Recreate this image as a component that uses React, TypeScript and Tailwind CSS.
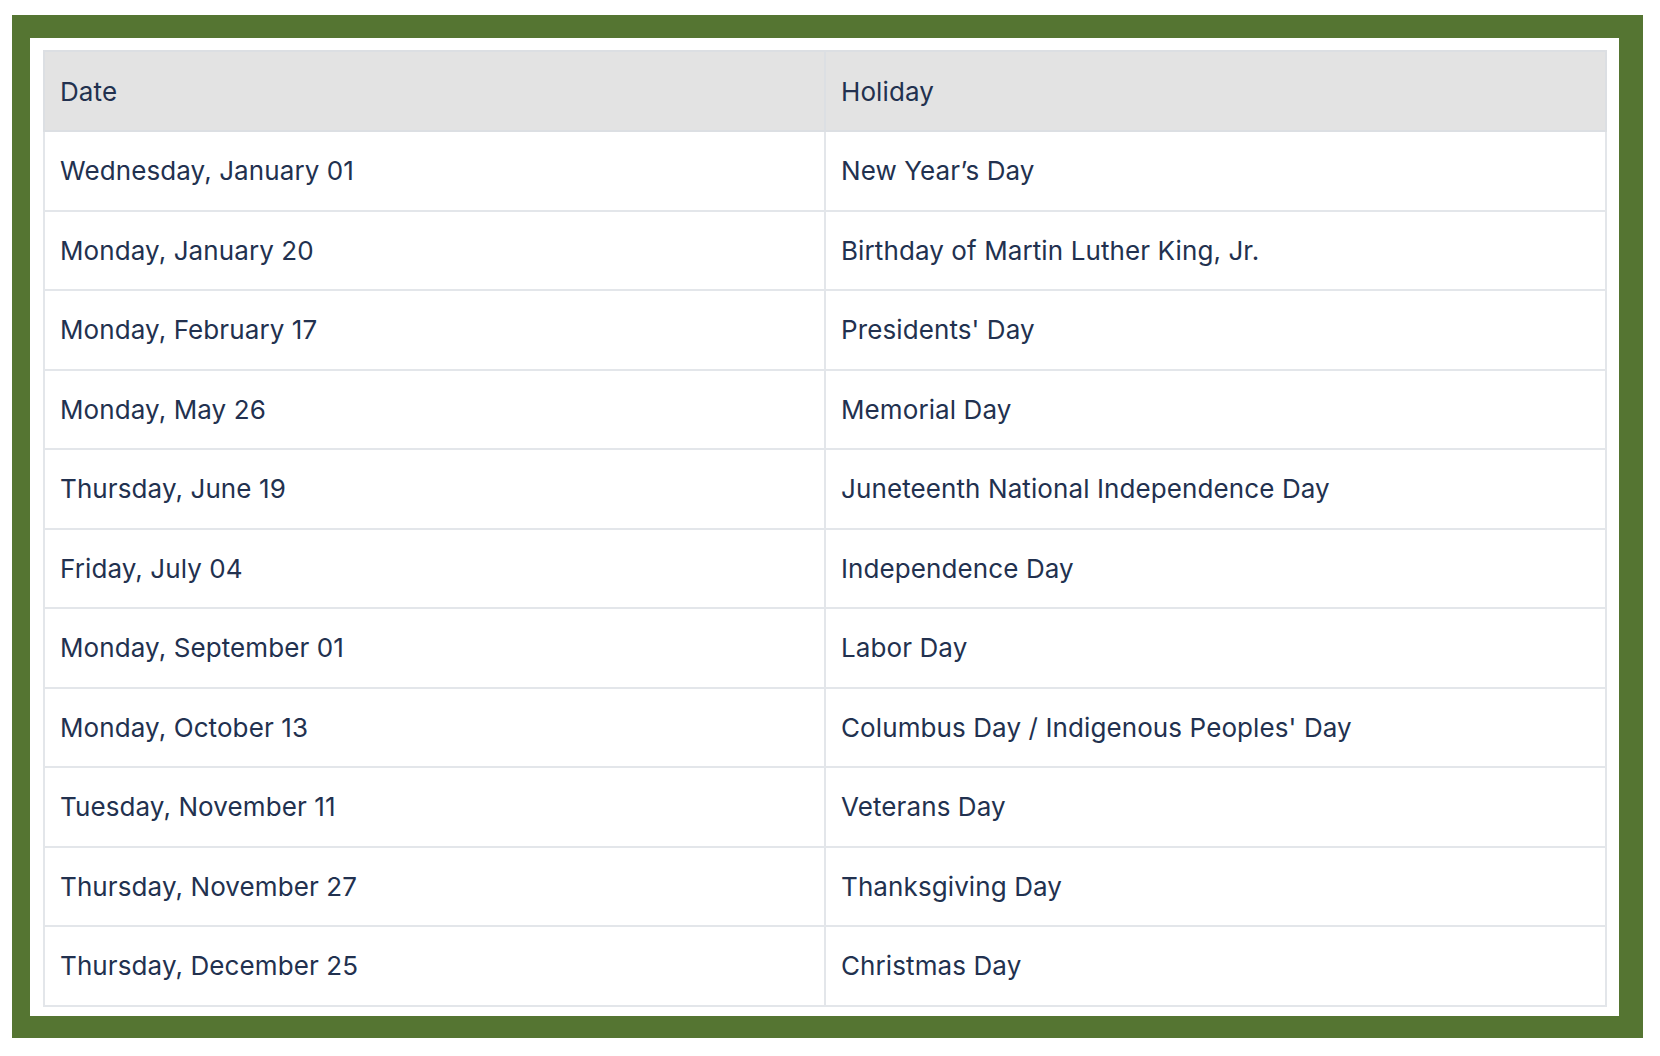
const rows: [string, string][] = [
  ['Wednesday, January 01', 'New Year’s Day'],
  ['Monday, January 20', 'Birthday of Martin Luther King, Jr.'],
  ['Monday, February 17', "Presidents' Day"],
  ['Monday, May 26', 'Memorial Day'],
  ['Thursday, June 19', 'Juneteenth National Independence Day'],
  ['Friday, July 04', 'Independence Day'],
  ['Monday, September 01', 'Labor Day'],
  ['Monday, October 13', "Columbus Day / Indigenous Peoples' Day"],
  ['Tuesday, November 11', 'Veterans Day'],
  ['Thursday, November 27', 'Thanksgiving Day'],
  ['Thursday, December 25', 'Christmas Day'],
];

export default function App() {
  return (
    <div className="w-[1660px] h-[1056px] bg-white pt-[15px] pl-[12px]" style={{ fontFamily: 'Inter, "Noto Sans", sans-serif' }}>
      <div className="w-[1631px] h-[1023px] bg-[#557532] pl-[18px] pt-[23px] pr-[24px] pb-[22px]">
        <div className="w-full h-full bg-white pl-[13px] pt-[12px] pr-[12px] pb-[11px]">
          <table className="w-full border-collapse table-fixed text-[#22314f] text-[26px] tracking-[0.1px]">
            <thead>
              <tr className="h-[80px] bg-[#e3e3e3]">
                <th className="w-1/2 border-2 border-[#dcdfe3] px-[15px] text-left font-normal">Date</th>
                <th className="w-1/2 border-2 border-[#dcdfe3] px-[15px] text-left font-normal">Holiday</th>
              </tr>
            </thead>
            <tbody>
              {rows.map(([date, holiday]) => (
                <tr key={date} className="h-[79.5px]">
                  <td className="border-2 border-[#e3e6ea] px-[15px]">{date}</td>
                  <td className="border-2 border-[#e3e6ea] px-[15px]">{holiday}</td>
                </tr>
              ))}
            </tbody>
          </table>
        </div>
      </div>
    </div>
  );
}
